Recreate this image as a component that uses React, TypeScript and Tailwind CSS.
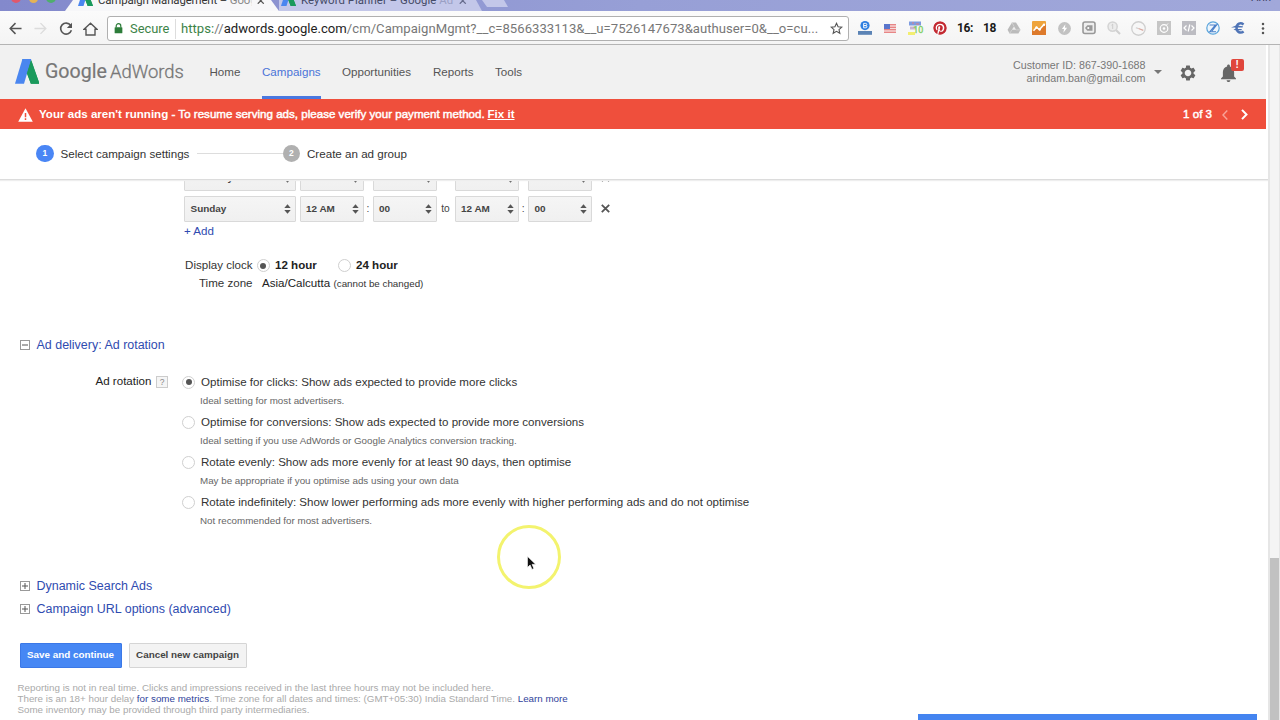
import React from "react";
import { FaPinterest } from "react-icons/fa";

function AdWordsMark({ className }: { className: string }) {
  return (
    <svg viewBox="0 0 25 25" preserveAspectRatio="none" className={className}>
      <path d="M7.6 0H16L25 24.8H16.2L9 5.5Z" fill="#1a9a5c" />
      <path d="M7.6 0H16.6L9.2 24.8H0Z" fill="#4a86f0" />
      <path d="M12.2 14.5L16.6 1.2L25 24.8H16.2Z" fill="#1a9a5c" />
    </svg>
  );
}

function TabStrip() {
  return (
    <div className="relative flex h-[11px] shrink-0 overflow-hidden bg-linear-to-r from-[#8389cc] via-[#979fd6] to-[#a1a8da] text-[11.4px] leading-[22px] text-[#333] font-[Roboto,sans-serif]">
      <div className="-mt-[7px] flex w-[65px] gap-[8px] pl-[11px]">
        <span className="size-[9.5px] rounded-full bg-[#e0586c]" />
        <span className="size-[9.5px] rounded-full bg-[#e4b355]" />
        <span className="size-[9.5px] rounded-full bg-[#4fae6d]" />
      </div>
      <div className="flex h-[11px] w-[214px] overflow-hidden bg-[#f7f7f9] [clip-path:polygon(0_100%,8px_0,206px_0,100%_100%)]">
        <div className="-mt-[11px] flex h-[22px] items-center">
          <AdWordsMark className="ml-[13px] mt-[-3px] h-[14px] w-[15px]" />
          <span className="ml-[5px] w-[154px] overflow-hidden whitespace-nowrap tracking-[-0.130px]">Campaign Management – <span className="text-[#888]">Goo</span><span className="text-[#ddd]">g</span></span>
        </div>
        <svg viewBox="0 0 8 8" className="ml-[5px] mt-[-3.5px] size-[7.5px]"><path d="M.8.8L7.2 7.2M7.2.8L.8 7.2" stroke="#555" strokeWidth="1.3" /></svg>
      </div>
      <div className="flex h-[11px] w-[203px] overflow-hidden bg-[#c3c7e9] [clip-path:polygon(0_100%,0_0,197px_0,100%_100%)]">
        <div className="-mt-[11px] flex h-[22px] items-center">
          <AdWordsMark className="ml-[2px] mt-[-3px] h-[14px] w-[15px]" />
          <span className="ml-[5px] w-[154px] overflow-hidden whitespace-nowrap tracking-[0.050px] text-[#444a66]">Keyword Planner – Google <span className="text-[#9a9fc4]">Ad</span></span>
        </div>
        <svg viewBox="0 0 8 8" className="ml-[4px] mt-[-3.5px] size-[7.5px]"><path d="M.8.8L7.2 7.2M7.2.8L.8 7.2" stroke="#666b8c" strokeWidth="1.3" /></svg>
      </div>
      <div className="h-[7px] w-[26px] bg-[#c3c7e9] [clip-path:polygon(0_0,22px_0,100%_100%,5px_100%)]" />
      <span className="-mt-[13px] ml-auto mr-[9px] text-[11px] text-[#3c4060]">Arin</span>
    </div>
  );
}

const cell = "flex w-[24.9px] shrink-0 items-center justify-center";

function Extensions() {
  return (
    <div className="flex h-[25px] font-[Roboto,sans-serif]">
      <div className={cell}>
        <svg viewBox="0 0 14 14" className="size-[14px]">
          <circle cx="7" cy="4.6" r="4.6" fill="#2f7fe0" />
          <path d="M5.6 2.4h2.2q1 0 1 1.1t-1 1.1H5.6zM5.6 4.6h2.3q1 0 1 1.1t-1 1.1H5.6z" fill="none" stroke="#fff" strokeWidth=".9" />
          <rect x="0" y="10" width="14" height="3.8" fill="#5b83b5" />
        </svg>
      </div>
      <div className={cell}>
        <svg viewBox="0 0 12 9" className="h-[9px] w-[12px]">
          <rect width="12" height="9" fill="#f6dcdc" />
          <path d="M0 .7h12M0 3.2h12M0 5.7h12M0 8.2h12" stroke="#e26a6a" strokeWidth="1.1" />
          <rect width="6" height="5" fill="#5a76cc" />
        </svg>
      </div>
      <div className={cell}>
        <div className="relative h-[14px] w-[14px]">
          <svg viewBox="0 0 14 14" className="size-[14px]">
            <path d="M1 .5h12v4H1z" fill="#7d9be0" />
            <path d="M2 5.5h6v3H2z" fill="#c9b3d0" />
            <path d="M4 2h2M8 3h3" stroke="#e08080" />
            <path d="M0 11h7v3H0z" fill="#f3ee70" />
          </svg>
          <span className="absolute left-[5.5px] top-[5px] text-[9px] leading-[9px] text-[#7ccf5c] [-webkit-text-stroke:0.300px_#7ccf5c]">10</span>
        </div>
      </div>
      <div className={cell}><FaPinterest className="rounded-full bg-white text-[14px] text-[#c32a32]" /></div>
      <div className={cell}><span className="pl-[1px] text-[12px] font-bold tracking-[-0.400px] text-[#1a1a1a]">16:</span></div>
      <div className={cell}><span className="text-[12px] font-bold tracking-[-0.400px] text-[#1a1a1a]">18</span></div>
      <div className={cell}>
        <svg viewBox="0 0 14 13" className="h-[12px] w-[14px]">
          <path d="M4.8.5h4.4L14 8.500l-2.200 4H2.200L0 8.500z" fill="#bbb" />
          <path d="M7 4.800L9.300 8.500H4.700z" fill="#eee" />
          <path d="M9.300 8.500H14M4.700 8.500L2.300 12.500M7 4.800L4.800.500" stroke="#d8d8d8" strokeWidth=".8" />
        </svg>
      </div>
      <div className={cell}>
        <svg viewBox="0 0 14 14" className="size-[14px]">
          <rect width="14" height="14" rx="1" fill="#eea43c" />
          <path d="M0 10l4-3 3 2 7-6v11H0z" fill="#dd7a2b" />
          <path d="M1.500 9.700L4.500 6.500l3 2L12 3.500" fill="none" stroke="#fff" strokeWidth="1.500" />
          <circle cx="4.500" cy="6.500" r="1.200" fill="#fff" /><circle cx="7.700" cy="8.500" r="1.200" fill="#fff" /><circle cx="12" cy="3.700" r="1.200" fill="#fff" />
        </svg>
      </div>
      <div className={cell}>
        <svg viewBox="0 0 14 14" className="size-[13px]">
          <circle cx="7" cy="7" r="6.900" fill="#c2c2c2" />
          <path d="M8 2.300L4.200 7.600h2.300L5.800 11.700 9.800 6.300H7.400z" fill="#fff" />
        </svg>
      </div>
      <div className={cell}>
        <svg viewBox="0 0 14 14" className="size-[14px]">
          <rect x="1" y="1" width="12" height="11.500" rx="2" fill="#eee" stroke="#999" strokeWidth="1.600" />
          <path d="M3 7l2.300-2.800H10.500v5.600H5.300z" fill="#999" />
          <circle cx="6.300" cy="7" r="1.100" fill="#fff" />
        </svg>
      </div>
      <div className={cell}>
        <svg viewBox="0 0 14 14" className="size-[14px]">
          <circle cx="5.600" cy="5.600" r="4.600" fill="#ececec" stroke="#d4d4d4" strokeWidth="1.500" />
          <path d="M9.200 9.200L13 13" stroke="#d0d0d0" strokeWidth="2" />
          <path d="M5.700 3v5M4.500 4.200l1.200-1.100" stroke="#ccc" fill="none" />
        </svg>
      </div>
      <div className={cell}>
        <svg viewBox="0 0 14 14" className="size-[15px]">
          <circle cx="7" cy="7" r="6.300" fill="#f7f7f7" stroke="#cfcfcf" strokeWidth="1.200" />
          <path d="M4.500 6.200L7 7" stroke="#ccc" strokeWidth="1" />
          <path d="M7 7l4.500 1.800" stroke="#d9a9a0" strokeWidth="1.200" />
        </svg>
      </div>
      <div className={cell}>
        <svg viewBox="0 0 14 14" className="size-[14px]">
          <rect width="14" height="14" fill="#c6c6c6" />
          <circle cx="7" cy="7.500" r="3.800" fill="none" stroke="#fff" strokeWidth="1.200" />
          <circle cx="7" cy="7.500" r="1.300" fill="#fff" />
          <path d="M9 4.500l2-2" stroke="#fff" />
        </svg>
      </div>
      <div className={cell}>
        <svg viewBox="0 0 14 14" className="size-[14px]">
          <rect width="14" height="14" fill="#bcbcc2" />
          <path d="M4.500 4.500L2 7l2.500 2.500M9.500 4.500L12 7 9.500 9.500M7.800 3.500L6.200 10.500" fill="none" stroke="#fff" strokeWidth="1.200" />
        </svg>
      </div>
      <div className={cell}>
        <svg viewBox="0 0 14 14" className="size-[14px]">
          <circle cx="7" cy="7" r="6.200" fill="#eef6fc" stroke="#5aa5dc" strokeWidth="1.200" />
          <path d="M3.500 4h5.800L3.800 10.800H10M11.500 2.800L6 10" fill="none" stroke="#4a7fc8" strokeWidth="1.100" />
        </svg>
      </div>
      <div className={cell}>
        <svg viewBox="0 0 14 12" className="h-[12px] w-[14px]">
          <path d="M12.600 2.400C9.500.200 5.800 1.300 5.500 6c.2 4.500 4.200 5.700 7.100 3.500" fill="none" stroke="#4f74b6" strokeWidth="2.500" />
          <path d="M0 5.600L5 3.500l7 .8-.5 1.200zM2.500 6.900h8.200v1.300H4z" fill="#4f74b6" />
        </svg>
      </div>
      <div className={cell}>
        <svg viewBox="0 0 4 14" className="h-[13px] w-[4px]" fill="#555"><circle cx="2" cy="2.200" r="1.350" /><circle cx="2" cy="7" r="1.350" /><circle cx="2" cy="11.800" r="1.350" /></svg>
      </div>
    </div>
  );
}

function Toolbar() {
  return (
    <div className="flex h-[34px] shrink-0 items-center border-b border-[#b4b4b4] bg-linear-to-b from-[#fbfbfb] to-[#f4f4f4] font-[Roboto,sans-serif]">
      <svg viewBox="0 0 14 14" className="ml-[9px] mt-[2px] size-[13px]"><path d="M13.500 7H1.500M7 1.200L1.300 7 7 12.800" fill="none" stroke="#555" strokeWidth="1.600" /></svg>
      <svg viewBox="0 0 14 14" className="ml-[12px] mt-[2px] size-[13px]"><path d="M.5 7h12M7 1.200L12.700 7 7 12.800" fill="none" stroke="#dcdcdc" strokeWidth="1.500" /></svg>
      <svg viewBox="0 0 14 14" className="ml-[12px] mt-[2px] size-[14px]"><path d="M11.600 3.300A5.500 5.500 0 1 0 12.400 8.300" fill="none" stroke="#555" strokeWidth="1.600" /><path d="M13 .8V6H7.800z" fill="#555" /></svg>
      <svg viewBox="0 0 15 14" className="ml-[10px] mt-[2px] h-[14px] w-[15px]"><path d="M7.500 1.200L1 7.300h2v5.700h9V7.300h2z" fill="none" stroke="#555" strokeWidth="1.400" /></svg>
      <div className="ml-[8.500px] mt-[1px] flex h-[25px] w-[742px] items-center rounded-[3px] border border-[#b0b0b0] bg-white pt-[1px]">
        <svg viewBox="0 0 9 12" className="ml-[6px] h-[11px] w-[9px]"><path d="M2 5V3.200a2.500 2.500 0 0 1 5 0V5" fill="none" stroke="#2d7d3a" strokeWidth="1.300" /><rect x=".3" y="4.700" width="8.400" height="6.600" rx=".6" fill="#2d7d3a" /></svg>
        <span className="ml-[7.500px] w-[40px] text-[12.900px] text-[#3c8347]">Secure</span>
        <span className="ml-[4.500px] h-[20px] w-px bg-[#ddd]" />
        <span className="ml-[5.500px] w-[649.500px] whitespace-nowrap text-[13.100px] tracking-[0.025px] text-[#777]">
          <span className="text-[#3c8347]">https:</span>//<span className="text-[#222]">adwords.google.com</span>/cm/CampaignMgmt?__c=8566333113&amp;__u=7526147673&amp;authuser=0&amp;__o=cu...
        </span>
        <svg viewBox="0 0 14 14" className="-ml-[1px] size-[13px]"><path d="M7 1.400l1.700 3.700 4 .4-3 2.700.9 4L7 10.100l-3.600 2.100.9-4-3-2.700 4-.4z" fill="none" stroke="#555" strokeWidth="1.200" /></svg>
      </div>
      <div className="ml-[4px] mt-[1px]"><Extensions /></div>
    </div>
  );
}

function Header() {
  return (
    <div className="flex h-[54px] w-[1266px] shrink-0 items-start bg-[#f1f1f1] text-[11.600px] leading-[16px] text-[#555]">
      <AdWordsMark className="ml-[14.500px] mt-[13.500px] h-[25px] w-[24.500px]" />
      <div className="ml-[6px] mt-[14px] flex w-[164.500px] items-baseline whitespace-nowrap font-[Roboto,sans-serif] leading-[26px] text-[#777]">
        <span className="w-[65px] text-[19.600px] [-webkit-text-stroke:0.200px_#777]">Google</span>
        <span className="text-[18.400px] font-light [-webkit-text-stroke:0.300px_#777]">AdWords</span>
      </div>
      <span className="mt-[18.500px] w-[52.500px]">Home</span>
      <div className="flex h-[54px] w-[59px] flex-col border-b-[3px] border-[#4a78e0] pt-[19px] text-[#4a74d8]">Campaigns</div>
      <span className="ml-[21px] mt-[18.500px] w-[91px]">Opportunities</span>
      <span className="mt-[18.500px] w-[62px]">Reports</span>
      <span className="mt-[18.500px]">Tools</span>
      <div className="ml-auto mt-[14px] w-[140px] text-right text-[10.690px] leading-[12.500px] text-[#777]">
        <div className="whitespace-nowrap">Customer ID: 867-390-1688</div>
        <div>arindam.ban@gmail.com</div>
      </div>
      <svg viewBox="0 0 8 4" className="ml-[8px] mt-[25px] h-[4px] w-[8px]"><path d="M0 0h8L4 4z" fill="#777" /></svg>
      <svg viewBox="0 0 24 24" className="ml-[17.500px] mt-[18.500px] size-[18px]" fill="#666">
        <path d="M19.430 12.980c.04-.320.070-.640.070-.980s-.030-.660-.070-.980l2.110-1.650c.190-.150.240-.420.120-.640l-2-3.460c-.120-.220-.390-.300-.610-.220l-2.490 1c-.520-.400-1.080-.730-1.690-.980l-.380-2.650C14.460 2.180 14.250 2 14 2h-4c-.250 0-.460.180-.490.420l-.380 2.650c-.610.250-1.170.590-1.690.980l-2.490-1c-.230-.090-.490 0-.610.220l-2 3.460c-.130.220-.070.490.120.640l2.110 1.650c-.040.320-.070.650-.070.980s.030.660.070.980l-2.110 1.650c-.190.150-.240.420-.120.640l2 3.460c.120.220.390.300.610.220l2.490-1c.520.400 1.080.730 1.690.980l.380 2.650c.030.240.240.420.490.420h4c.250 0 .460-.180.490-.420l.380-2.650c.610-.250 1.170-.590 1.690-.980l2.490 1c.230.090.490 0 .610-.220l2-3.460c.120-.220.070-.490-.120-.640l-2.110-1.650zM12 16.400c-2.400 0-4.400-2-4.400-4.400S9.600 7.600 12 7.600s4.400 2 4.400 4.400-2 4.400-4.400 4.400z" />
      </svg>
      <div className="relative ml-[21px] mr-[19px] mt-[16px] h-[24px] w-[29px]">
        <svg viewBox="4 2 16 20" preserveAspectRatio="none" className="absolute left-[2.500px] top-[3px] h-[18px] w-[15px]" fill="#666"><path d="M12 22c1.100 0 2-.900 2-2h-4c0 1.100.900 2 2 2zm6-6v-5c0-3.070-1.630-5.640-4.500-6.320V4c0-.830-.670-1.500-1.500-1.500s-1.500.670-1.500 1.500v.680C7.640 5.360 6 7.920 6 11v5l-2 2v1h16v-1l-2-2z" /></svg>
        <span className="absolute left-[13px] top-[-2px] flex h-[12px] w-[12.500px] items-center justify-center rounded-[2px] bg-[#e0463c] text-[10px] font-bold text-white">!</span>
      </div>
    </div>
  );
}

const thick = "[-webkit-text-stroke:0.450px_white]";

function AlertBar() {
  return (
    <div className="flex h-[29.500px] w-[1266px] shrink-0 items-center whitespace-nowrap bg-[#ef4f3c] pt-[1.500px] text-[11.580px] text-white">
      <svg viewBox="0 0 15 14" className="ml-[17.500px] h-[14px] w-[15px]"><path d="M7.500.3L14.800 13.700H.2z" fill="#fff" /><path d="M7.500 5v4.300M7.500 10.300v1.800" stroke="#ef4f3c" strokeWidth="1.500" /></svg>
      <span className="ml-[6.500px] w-[132.500px] font-bold">Your ads aren&apos;t running</span>
      <span className={"w-[316px] " + thick}>- To resume serving ads, please verify your payment method.</span>
      <span className="font-bold underline">Fix it</span>
      <span className={"ml-auto mr-[10px] " + thick}>1 of 3</span>
      <svg viewBox="0 0 6 10" className="mr-[13px] h-[10px] w-[6px]"><path d="M5.300.6L1 5l4.300 4.400" fill="none" stroke="#f8a398" strokeWidth="1.400" /></svg>
      <svg viewBox="0 0 7 11" className="mr-[18px] h-[11px] w-[7px]"><path d="M1 .9L5.500 5.500 1 10.100" fill="none" stroke="#fff" strokeWidth="2" /></svg>
    </div>
  );
}

function Steps() {
  return (
    <div className="z-10 flex h-[51.500px] w-[1268px] shrink-0 items-center border-b border-[#dcdcdc] bg-white pb-[1px] text-[11.600px] text-[#333] shadow-[0_1px_1px_#eeeeee]">
      <span className="ml-[36px] flex size-[17.500px] items-center justify-center rounded-full bg-[#4a86f5] text-[8.500px] font-bold text-white">1</span>
      <span className="ml-[7px] w-[136px]">Select campaign settings</span>
      <span className="h-px w-[86px] bg-[#ddd]" />
      <span className="flex size-[17.500px] items-center justify-center rounded-full bg-[#b0b0b0] text-[8.500px] font-bold text-white">2</span>
      <span className="ml-[7px]">Create an ad group</span>
    </div>
  );
}

function Picker({ label, className }: { label: string; className: string }) {
  return (
    <div className={"flex h-[26px] shrink-0 items-center justify-between rounded-[1px] border border-[#d9d9d9] bg-linear-to-b from-[#f5f5f5] to-[#f0f0f0] pl-[5.500px] pr-[4px] text-[9.950px] font-bold text-[#444] " + className}>
      <span className="pt-[2px]">{label}</span>
      <svg viewBox="0 0 7 10" className="mt-px h-[10px] w-[7px]" fill="#555"><path d="M3.500.3L6.700 4H.3zM3.500 9.700L6.700 6H.3z" /></svg>
    </div>
  );
}

function ScheduleRow({ day }: { day: string }) {
  return (
    <div className="flex h-[26px] items-center text-[10.200px] text-[#444]">
      <Picker label={day} className="w-[111.500px]" />
      <Picker label="12 AM" className="ml-[4px] w-[64px]" />
      <span className="w-[9px] text-center">:</span>
      <Picker label="00" className="w-[64px]" />
      <span className="w-[18px] pt-[1px] text-center">to</span>
      <Picker label="12 AM" className="w-[64px]" />
      <span className="w-[9.500px] text-center">:</span>
      <Picker label="00" className="w-[64px]" />
      <svg viewBox="0 0 9 9" className="ml-[9px] mt-[-1px] size-[9px]"><path d="M.8.8L8.200 8.200M8.200.8L.8 8.200" stroke="#555" strokeWidth="1.800" /></svg>
    </div>
  );
}

function Radio({ on }: { on?: boolean }) {
  return (
    <span className="flex size-[13px] shrink-0 items-center justify-center rounded-full border border-[#cfcfcf] bg-white">
      {on && <span className="size-[6px] rounded-full bg-[#555]" />}
    </span>
  );
}

function Toggle({ open }: { open?: boolean }) {
  return (
    <svg viewBox="0 0 10 10" className="mr-[6.500px] size-[10px] shrink-0">
      <rect x=".5" y=".5" width="9" height="9" fill="#fff" stroke="#999" />
      <path d={open ? "M2 5h6" : "M2 5h6M5 2v6"} stroke="#555" />
    </svg>
  );
}

const options = [
  ["Optimise for clicks: Show ads expected to provide more clicks", "Ideal setting for most advertisers."],
  ["Optimise for conversions: Show ads expected to provide more conversions", "Ideal setting if you use AdWords or Google Analytics conversion tracking."],
  ["Rotate evenly: Show ads more evenly for at least 90 days, then optimise", "May be appropriate if you optimise ads using your own data"],
  ["Rotate indefinitely: Show lower performing ads more evenly with higher performing ads and do not optimise", "Not recommended for most advertisers."],
];

function Section({ open, className, children }: { open?: boolean; className: string; children: React.ReactNode }) {
  return (
    <div className={"flex items-center pl-[20px] text-[12.480px] text-[#2f4bb0] " + className}>
      <Toggle open={open} />
      <span className="pt-[1.500px]">{children}</span>
    </div>
  );
}

function Settings() {
  return (
    <div className="-mt-[15.500px] flex flex-col text-[11.570px] text-[#333]">
      <div className="flex flex-col gap-[5px] pl-[184px]">
        <ScheduleRow day="Saturday" />
        <ScheduleRow day="Sunday" />
      </div>
      <div className="h-[35px] pl-[184px] leading-[19px] text-[#2f4bb0]">+ Add</div>
      <div className="flex h-[18px] items-center">
        <span className="w-[252.500px] text-right">Display clock</span>
        <span className="ml-[4px] flex w-[81px] items-center gap-[5.500px] font-bold text-[#222]"><Radio on />12 hour</span>
        <span className="flex items-center gap-[5.500px] font-bold text-[#222]"><Radio />24 hour</span>
      </div>
      <div className="flex h-[18px] items-center">
        <span className="w-[252.500px] text-right">Time zone</span>
        <span className="ml-[9.500px] w-[71.500px] text-[#222]">Asia/Calcutta</span>
        <span className="pt-px text-[9.800px]">(cannot be changed)</span>
      </div>
      <Section open className="mt-[42px] h-[20px]">Ad delivery: Ad rotation</Section>
      <div className="mt-[17px] flex">
        <div className="flex h-[20px] w-[182px] items-center pl-[95.500px] text-[#222]">
          <span>Ad rotation</span>
          <span className="ml-[5px] mt-[1px] flex h-[11.500px] w-[11.500px] items-center justify-center border border-[#ccc] bg-[#f5f5f5] text-[8.500px] text-[#888]">?</span>
        </div>
        <div className="flex flex-col whitespace-nowrap">
          {options.map(([title, hint], i) => (
            <div key={title} className="h-[40px]">
              <div className="flex h-[20px] items-center gap-[6px] pt-[1px]"><Radio on={i === 0} /><span className="pt-[1px]">{title}</span></div>
              <div className="pl-[18px] pt-px text-[9.800px] leading-[16px] text-[#666]">{hint}</div>
            </div>
          ))}
        </div>
      </div>
      <Section className="mt-[42.500px] h-[23px]">Dynamic Search Ads</Section>
      <Section className="h-[23px]">Campaign URL options (advanced)</Section>
      <div className="mt-[22.500px] flex gap-[7px] pl-[19.500px] text-[9.850px] font-bold">
        <span className="flex h-[25px] w-[102px] items-center justify-center rounded-[1px] border border-[#3b78e7] bg-[#4687f4] pt-[1.500px] text-white">Save and continue</span>
        <span className="flex h-[25px] w-[118px] items-center justify-center rounded-[1px] border border-[#d5d5d5] bg-[#f3f3f3] pt-[1.500px] text-[#444]">Cancel new campaign</span>
      </div>
      <div className="mt-[15.800px] whitespace-nowrap pl-[17.500px] text-[9.790px] leading-[10.700px] text-[#aaa]">
        <div>Reporting is not in real time. Clicks and impressions received in the last three hours may not be included here.</div>
        <div>There is an 18+ hour delay <span className="text-[#2f3f9a]">for some metrics</span>. Time zone for all dates and times: (GMT+05:30) India Standard Time. <span className="text-[#2f3f9a]">Learn more</span></div>
        <div>Some inventory may be provided through third party intermediaries.</div>
      </div>
    </div>
  );
}

export default function App() {
  return (
    <div className="relative flex h-[720px] w-[1280px] flex-col overflow-hidden bg-white font-['Liberation_Sans',Arial,sans-serif]">
      <TabStrip />
      <Toolbar />
      <div className="flex min-h-0 flex-1">
        <div className="flex w-[1268px] flex-col overflow-hidden">
          <Header />
          <AlertBar />
          <Steps />
          <div className="min-h-0 flex-1 overflow-hidden"><Settings /></div>
        </div>
        <div className="flex w-[12px] flex-col justify-end border-l-2 border-r border-[#e6e6e6] bg-[#f4f4f4]">
          <div className="h-[162px] bg-[#c1c1c1]" />
        </div>
      </div>
      <div className="absolute left-[918px] top-[714px] h-[6px] w-[339px] bg-[#4484f0]" />
      <div className="absolute left-[497px] top-[525px] size-[64px] rounded-full border-[3px] border-[#f3f36e]" />
      <svg viewBox="0 0 12 17" className="absolute left-[526px] top-[555px] h-[16px] w-[11px]"><path d="M1.500 1v12.500l3-2.700 2 4.700 2.200-.9-2-4.600h4z" fill="#111" stroke="#fff" strokeWidth=".8" /></svg>
    </div>
  );
}
